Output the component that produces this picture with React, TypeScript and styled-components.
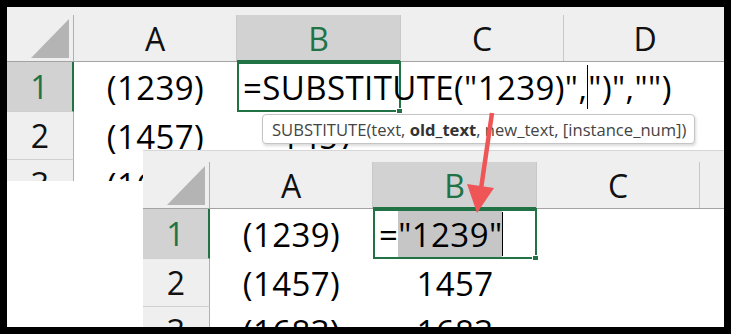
import React from "react";
import styled, { createGlobalStyle, css } from "styled-components";

const GREEN = "#217346";
const FONT = `"Open Sans", "Noto Sans", "Liberation Sans", sans-serif`;

const GlobalStyle = createGlobalStyle`
  html, body {
    margin: 0;
    padding: 0;
    background: #000;
  }
  body {
    width: 731px;
    height: 334px;
    overflow: hidden;
    font-family: ${FONT};
  }
`;

type Row = {
  label: string;
  cells: React.ReactNode[];
};

type SheetProps = {
  columns: string[];
  selectedCol: number;
  head: number;
  top: number;
  rows: Row[];
  active: React.ReactNode;
};

const Sheet = ({ columns, selectedCol, head, top, rows, active }: SheetProps) => {
  return (
    <Grid $head={head}>
      <Corner $top={top}>
        <CornerInner>
          <Triangle />
        </CornerInner>
      </Corner>
      {columns.map((c, i) => (
        <HeaderCell key={c + i} $top={top} $selected={i === selectedCol}>
          <HeaderLabel $selected={i === selectedCol}>{c}</HeaderLabel>
        </HeaderCell>
      ))}
      {rows.map((r, ri) => (
        <React.Fragment key={r.label}>
          <RowHeader $selected={ri === 0}>{r.label}</RowHeader>
          {columns.map((_, ci) =>
            ri === 0 && ci === selectedCol ? (
              <ActiveCell key={ci}>{active}</ActiveCell>
            ) : (
              <Cell key={ci}>{r.cells[ci]}</Cell>
            )
          )}
        </React.Fragment>
      ))}
    </Grid>
  );
};

const App = () => {
  return (
    <Frame>
      <GlobalStyle />
      <Canvas>
        <BackSheet>
          <Sheet
            columns={["A", "B", "C", "D"]}
            selectedCol={1}
            head={55}
            top={8}
            rows={[
              { label: "1", cells: ["(1239)"] },
              { label: "2", cells: ["(1457)", "1457"] },
              { label: "3", cells: ["(1683)", "1683"] },
            ]}
            active={
              <Plain>
                =SUBSTITUTE("1239)",
                <Caret />
                ")","")
              </Plain>
            }
          />
        </BackSheet>

        <Tooltip>
          SUBSTITUTE(text,&nbsp;<b>old_text</b>, new_text, [instance_num])
        </Tooltip>

        <FrontSheet>
          <Sheet
            columns={["A", "B", "C", ""]}
            selectedCol={1}
            head={58}
            top={11}
            rows={[
              { label: "1", cells: ["(1239)"] },
              { label: "2", cells: ["(1457)", "1457"] },
              { label: "3", cells: ["(1683)", "1683"] },
            ]}
            active={
              <>
                <Plain>=</Plain>
                <Highlight>"1239"</Highlight>
                <Plain>
                  <Caret />
                </Plain>
              </>
            }
          />
        </FrontSheet>

        <Arrow viewBox='0 0 717 320' width={717} height={320}>
          <line
            x1={485}
            y1={106}
            x2={474}
            y2={182}
            stroke='#ef5457'
            strokeWidth={4.5}
          />
          <polygon points='470,206 460,177 487,181' fill='#ef5457' />
        </Arrow>
      </Canvas>
    </Frame>
  );
};

export default App;

const Frame = styled.div`
  width: 731px;
  height: 334px;
  box-sizing: border-box;
  padding: 7px;
  background: #000;
`;

const Canvas = styled.div`
  position: relative;
  width: 717px;
  height: 320px;
  background: #fff;
  overflow: hidden;
`;

const BackSheet = styled.div`
  width: 717px;
  height: 174px;
  overflow: hidden;
`;

const FrontSheet = styled.div`
  position: absolute;
  left: 136px;
  top: 143px;
  width: 581px;
  height: 177px;
  overflow: hidden;
  border-top: 1px solid #d6d6d6;
  box-sizing: border-box;
  z-index: 2;
`;

const Grid = styled.div<{ $head: number }>`
  display: grid;
  grid-template-columns: 67px 163px 164px 163px 163px;
  grid-template-rows: ${(p) => p.$head}px 50px 48px 48px;
  background: #fff;
  font-family: ${FONT};
`;

const Corner = styled.div<{ $top: number }>`
  display: flex;
  box-sizing: border-box;
  padding-top: ${(p) => p.$top}px;
  background: #efefef;
  border-bottom: 1px solid #a3a3a3;
`;

const CornerInner = styled.div`
  flex: 1;
  display: flex;
  justify-content: flex-end;
  align-items: flex-end;
  padding: 0 4px 3px 0;
  border-right: 1px solid #b0b0b0;
`;

const Triangle = styled.div`
  width: 38px;
  height: 39px;
  background: #b4b4b4;
  clip-path: polygon(100% 0, 100% 100%, 0 100%);
`;

const HeaderCell = styled.div<{ $top: number; $selected?: boolean }>`
  display: flex;
  box-sizing: border-box;
  padding-top: ${(p) => p.$top}px;
  background: #efefef;
  border-bottom: 1px solid ${(p) => (p.$selected ? GREEN : "#a3a3a3")};
`;

const HeaderLabel = styled.div<{ $selected?: boolean }>`
  flex: 1;
  display: flex;
  align-items: center;
  justify-content: center;
  border-right: 1px solid #c8c8c8;
  font-size: 32px;
  color: ${(p) => (p.$selected ? GREEN : "#111")};
  background: ${(p) => (p.$selected ? "#d2d2d2" : "transparent")};
  ${(p) =>
    p.$selected &&
    css`
      box-shadow: inset 0 -1px 0 ${GREEN};
    `}
`;

const RowHeader = styled.div<{ $selected?: boolean }>`
  display: flex;
  align-items: center;
  justify-content: center;
  box-sizing: border-box;
  font-size: 32px;
  color: ${(p) => (p.$selected ? GREEN : "#111")};
  background: ${(p) => (p.$selected ? "#d2d2d2" : "#efefef")};
  border-right: ${(p) => (p.$selected ? `2px solid ${GREEN}` : "1px solid #b0b0b0")};
  border-bottom: 1px solid #cfcfcf;
`;

const Cell = styled.div`
  display: flex;
  align-items: center;
  justify-content: center;
  font-size: 33px;
  letter-spacing: 0.4px;
  color: #000;
  white-space: nowrap;
`;

const ActiveCell = styled.div`
  position: relative;
  z-index: 1;
  display: flex;
  align-items: stretch;
  box-sizing: border-box;
  padding-left: 4px;
  border: 2px solid ${GREEN};
  font-size: 33px;
  letter-spacing: 0.4px;
  color: #000;
  white-space: nowrap;

  &::after {
    content: "";
    position: absolute;
    right: -4px;
    bottom: -4px;
    width: 5px;
    height: 4px;
    background: ${GREEN};
    border: 1px solid #fff;
  }
`;

const Plain = styled.span`
  display: flex;
  align-items: center;
`;

const Highlight = styled.span`
  display: flex;
  align-items: center;
  background: #c6c6c6;
`;

const Caret = styled.span`
  display: inline-block;
  width: 1px;
  height: 44px;
  background: #000;
`;

const Tooltip = styled.div`
  position: absolute;
  left: 255px;
  top: 107px;
  z-index: 3;
  width: 433px;
  height: 30px;
  box-sizing: border-box;
  display: flex;
  align-items: center;
  padding: 0 9px;
  background: #fff;
  border: 1px solid #c5c5c5;
  border-radius: 4px;
  box-shadow: 1px 2px 3px rgba(0, 0, 0, 0.15);
  font-family: ${FONT};
  font-size: 16.6px;
  color: #444;
  white-space: nowrap;

  b {
    color: #333;
    font-weight: 700;
  }
`;

const Arrow = styled.svg`
  position: absolute;
  left: 0;
  top: 0;
  z-index: 4;
  pointer-events: none;
`;
